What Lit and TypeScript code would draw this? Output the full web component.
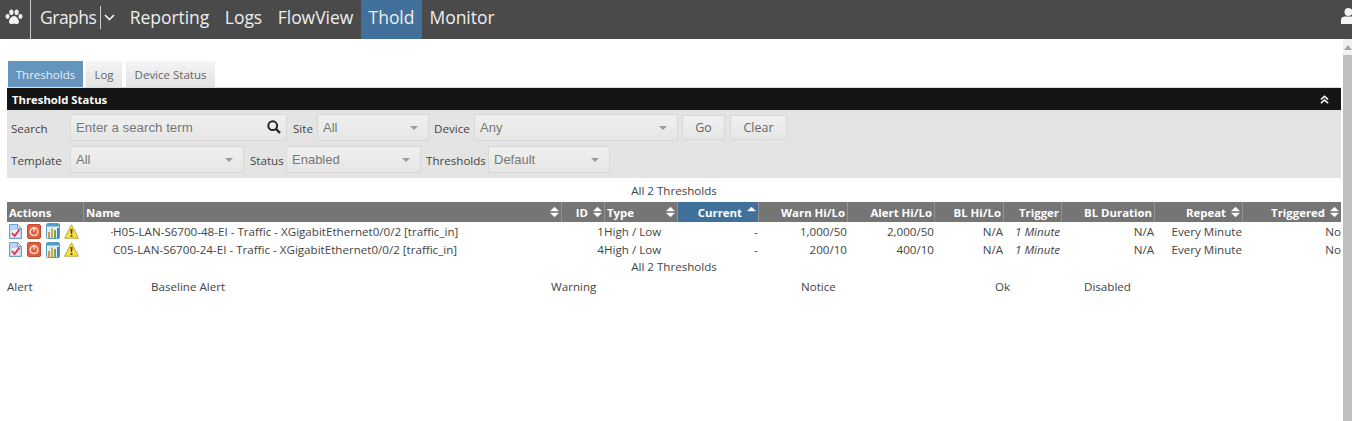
import { LitElement, html, css, svg } from "lit";
import { customElement } from "lit/decorators.js";

const sortIcon = (up = true, down = true) => svg`<svg class="sort" width="9" height="12" viewBox="0 0 9 12">
  ${up ? svg`<path d="M4.5 1 L8.5 5 H0.5 Z" fill="#fff" stroke="#fff" stroke-width=".4" stroke-linejoin="round"/>` : ""}
  ${down ? svg`<path d="M4.5 11 L8.5 7 H0.5 Z" fill="#fff" stroke="#fff" stroke-width=".4" stroke-linejoin="round"/>` : ""}
</svg>`;

const editIcon = svg`<svg class="i-edit" width="13" height="15" viewBox="0 0 13 15"><path d="M.5 .5H8.5L12.5 4.5V14.5H.5Z" fill="#bcd6f0" stroke="#6f9fd2"/><path d="M8.5 .5V4.5H12.5Z" fill="#f4f9fd" stroke="#6f9fd2"/><rect x="2.5" y="6" width="8" height="7" fill="#eef2f7"/><path d="M3 9 L5.6 12 L10.5 5.5" fill="none" stroke="#d8334f" stroke-width="1.9"/></svg>`;
const powerIcon = svg`<svg class="i-power" width="14" height="15" viewBox="0 0 14 15"><rect x=".5" y=".5" width="13" height="14" rx="1.5" fill="#dd5f3f" stroke="#c4492c"/><circle cx="7" cy="7.7" r="3.8" fill="none" stroke="#f6d9c4" stroke-width="1.6"/><path d="M7 3V7.5" stroke="#f6d9c4" stroke-width="1.6"/></svg>`;
const chartIcon = svg`<svg class="i-chart" width="14" height="16" viewBox="0 0 14 16"><rect x=".5" y=".5" width="13" height="15" rx="1" fill="#dfeef8" stroke="#5c9fc7"/><rect x="1" y="1" width="12" height="2.5" fill="#4f9cc6"/><rect x="2" y="9" width="2" height="6" fill="#e3933a"/><rect x="5" y="5.5" width="2" height="9.5" fill="#c6b240"/><rect x="8" y="7" width="2" height="8" fill="#6aa95a"/><rect x="11" y="5" width="2" height="10" fill="#3f86b8"/></svg>`;
const warnIcon = svg`<svg width="15" height="15" viewBox="0 0 15 15"><path d="M7.5 .8 L14.4 14.2 H.6 Z" fill="#f4df4c" stroke="#b9a93a" stroke-linejoin="round"/><path d="M6.4 5 H8.6 L8.1 10 H6.9 Z" fill="#5c3d16"/><rect x="6.6" y="11" width="1.8" height="1.8" fill="#5c3d16"/></svg>`;
const searchIcon = svg`<svg width="14" height="14" viewBox="0 0 14 14"><circle cx="5.7" cy="5.7" r="4.4" fill="none" stroke="#222" stroke-width="2"/><path d="M9 9 L13 13" stroke="#222" stroke-width="2.4"/></svg>`;
const pawIcon = svg`<svg width="18" height="16" viewBox="0 0 19 17" fill="#f2f2f2"><ellipse cx="2.6" cy="8" rx="2.1" ry="2.6"/><ellipse cx="6.7" cy="3.4" rx="2.2" ry="3"/><ellipse cx="12.3" cy="3.4" rx="2.2" ry="3"/><ellipse cx="16.4" cy="8" rx="2.1" ry="2.6"/><path d="M9.5 7.5C7 7.5 4.2 11 4.2 13.6C4.2 16 6.4 16.4 7.5 16C8.8 15.6 10.2 15.6 11.5 16C12.6 16.4 14.8 16 14.8 13.6C14.8 11 12 7.5 9.5 7.5Z"/></svg>`;
const userIcon = svg`<svg width="13" height="16" viewBox="0 0 13 16" fill="#f4f4f4"><circle cx="7.5" cy="4" r="4"/><path d="M0 16V11.5C0 9.5 2 8.5 4 8.5H11C12.5 8.5 13 9.5 13 11.5V16Z"/></svg>`;
const chevDown = svg`<svg width="11" height="7" viewBox="0 0 11 7"><path d="M1 1 L5.5 5.5 L10 1" fill="none" stroke="#eee" stroke-width="1.7"/></svg>`;
const chevUps = svg`<svg width="9" height="9" viewBox="0 0 10 10"><path d="M1 5 L5 1.5 L9 5 M1 9 L5 5.5 L9 9" fill="none" stroke="#fff" stroke-width="1.7"/></svg>`;

const rows = [
  { dash: true, name: "H05-LAN-S6700-48-EI - Traffic - XGigabitEthernet0/0/2 [traffic_in]", id: 1, warn: "1,000/50", alert: "2,000/50" },
  { dash: false, name: "C05-LAN-S6700-24-EI - Traffic - XGigabitEthernet0/0/2 [traffic_in]", id: 4, warn: "200/10", alert: "400/10" },
];

@customElement("app-root")
export class AppRoot extends LitElement {
  static styles = css`
    :host { display: block; width: 1352px; height: 421px; overflow: hidden; background: #fff;
      font-family: "Open Sans", "Noto Sans", sans-serif; font-size: 11.6px; color: #444; }
    * { box-sizing: border-box; }
    .nav { height: 39px; background: #4a4a4a; display: flex; align-items: stretch; color: #eee; font-size: 17.5px; }
    .logo { width: 31px; border-right: 1px solid #c8c8c8; display: flex; align-items: center; justify-content: center; padding: 0 3px 5px 0; }
    .item { padding: 0 0 5px; display: flex; align-items: center; justify-content: center; letter-spacing: -0.05px; }
    .graphs { width: 91px; padding-left: 9px; justify-content: flex-start; }
    .graphs .word { letter-spacing: -0.5px; }
    .graphs .bar { flex: none; width: 1px; height: 23px; background: #ccc; margin: 0 3px 0 4px; }
    .w-rep { width: 95px; }
    .w-logs { width: 53px; }
    .w-flow { width: 91px; }
    .w-thold { width: 61px; }
    .w-mon { width: 80px; }
    .item.on { background: #41719a; }
    .spacer { flex: 1; }
    .user { display: flex; align-items: center; padding-bottom: 7px; margin-right: -2px; }
    .below { display: flex; height: 382px; }
    .page { flex: 1; padding: 22px 2px 0 7px; min-width: 0; }
    .scroll { width: 9px; background: #f1f1f1; display: flex; flex-direction: column; align-items: center; }
    .up { height: 16px; padding-top: 6px; display: flex; justify-content: center; }
    .arrow { width: 0; height: 0; border: 4px solid transparent; border-top: 0; border-bottom: 5px solid #a3a3a3; }
    .thumb { flex: 1; width: 100%; background: #bfbfbf; }
    .tabs { display: flex; height: 27px; padding-left: 1px; border-bottom: 1px solid #ddd; }
    .tab { height: 26px; display: flex; align-items: center; justify-content: center; background: linear-gradient(#f5f5f5, #e2e2e2); color: #666; font-size: 11.5px; }
    .tab.on { background: #6595bd; color: #e8eff6; width: 75px; }
    .tab.log { width: 36px; margin-left: 3px; }
    .tab.dev { width: 89px; margin-left: 4px; }
    .title { height: 22px; background: #151515; color: #fff; font-weight: 700; font-size: 11.3px; display: flex; align-items: center; justify-content: space-between; padding: 0 12px 0 5px; }
    .filter { height: 68px; background: #e4e4e4; padding: 4px 0 0 4px; display: flex; flex-direction: column; gap: 5px; }
    .frow { display: flex; align-items: center; height: 27px; }
    .frow label { color: #444; padding-top: 2px; flex: none; }
    .l-search, .l-template { width: 59px; }
    .l-site { width: 30px; padding-left: 6px; }
    .l-device { width: 45px; padding-left: 5px; }
    .l-status { width: 42px; padding-left: 6px; }
    .l-thresholds { width: 67px; padding-left: 5px; }
    .ctl { height: 100%; flex: none; border: 1px solid #d8d8d8; background: linear-gradient(#f0f0f0, #e6e6e6); color: #777; display: flex; align-items: center; justify-content: space-between; padding: 0 5px 1px; font-size: 13px; font-family: "Liberation Sans", sans-serif; }
    .ctl .ph { font-size: 13.3px; }
    .c-search { width: 217px; }
    .c-site { width: 112px; }
    .c-device { width: 204px; }
    .c-template { width: 174px; }
    .c-status { width: 135px; }
    .c-thresholds { width: 122px; }
    .ctl .tri { width: 0; height: 0; border: 4px solid transparent; border-bottom: 0; border-top: 4px solid #999; margin-right: 5px; margin-top: 2px; }
    .btn { height: 25px; flex: none; border: 1px solid #d8d8d8; background: linear-gradient(#f0f0f0, #e6e6e6); color: #666; display: flex; align-items: center; justify-content: center; font-size: 12.5px; padding-bottom: 1px; }
    .b-go { width: 43px; margin-left: 4px; }
    .b-clear { width: 57px; margin-left: 5px; }
    .count { text-align: center; height: 24px; line-height: 25px; }
    .count.foot { height: 20px; line-height: 16px; }
    .thead, .trow { display: grid; grid-template-columns: 77px 478px 43px 73px 81px 89px 87px 69px 58px 93px 88px 99px; }
    .thead { height: 20px; background: #757575; color: #fff; font-weight: 700; }
    .th { display: flex; align-items: center; justify-content: flex-end; gap: 5px; padding: 0 2px; border-right: 1px solid #929292; white-space: nowrap; font-size: 11.4px; }
    .th:last-child { border-right: 0; padding-right: 3px; }
    .th.left { justify-content: flex-start; }
    .th.name { justify-content: space-between; padding-right: 2px; }
    .th.cur { background: #41719a; }
    .trow { height: 18.5px; align-items: center; }
    .td { text-align: right; white-space: nowrap; overflow: hidden; padding-right: 1px; }
    .td.left { text-align: left; padding: 0; }
    .td.ty { margin-left: -1px; }
    .td.nm { padding-left: 29px; }
    .td.it { font-style: italic; padding-right: 2px; }
    .dash { display: inline-block; width: 2px; height: 1px; margin-left: -2px; background: #777; vertical-align: 3px; }
    .acts { display: flex; align-items: center; padding-left: 2px; }
    .acts svg { display: block; flex: none; }
    .i-power { margin-left: 5px; }
    .i-chart { margin-left: 5px; }
    .acts svg:last-child { margin-left: 4px; }
    .legend { display: flex; height: 16px; }
    .legend span { display: block; flex: none; }
  `;

  render() {
    const heads: [string, string, unknown?][] = [
      ["Actions", "left"], ["Name", "left name", sortIcon()], ["ID", "", sortIcon()], ["Type", "left name", sortIcon()],
      ["Current", "cur", sortIcon(true, false)], ["Warn Hi/Lo", ""], ["Alert Hi/Lo", ""], ["BL Hi/Lo", ""], ["Trigger", ""],
      ["BL Duration", ""], ["Repeat", "", sortIcon()], ["Triggered", "", sortIcon()],
    ];
    const legend: [string, number][] = [["Alert", 144], ["Baseline Alert", 400], ["Warning", 250], ["Notice", 194], ["Ok", 89], ["Disabled", 100]];
    return html`
      <div class="nav">
        <div class="logo">${pawIcon}</div>
        <div class="item graphs"><span class="word">Graphs</span><span class="bar"></span>${chevDown}</div>
        <div class="item w-rep">Reporting</div>
        <div class="item w-logs">Logs</div>
        <div class="item w-flow">FlowView</div>
        <div class="item on w-thold">Thold</div>
        <div class="item w-mon">Monitor</div>
        <div class="spacer"></div>
        <div class="user">${userIcon}</div>
      </div>
      <div class="below">
        <div class="page">
          <div class="tabs">
            <div class="tab on">Thresholds</div><div class="tab log">Log</div><div class="tab dev">Device Status</div>
          </div>
          <div class="title"><span>Threshold Status</span>${chevUps}</div>
          <div class="filter">
            <div class="frow">
              <label class="l-search">Search</label>
              <div class="ctl c-search"><span class="ph">Enter a search term</span>${searchIcon}</div>
              <label class="l-site">Site</label>
              <div class="ctl c-site"><span>All</span><i class="tri"></i></div>
              <label class="l-device">Device</label>
              <div class="ctl c-device"><span>Any</span><i class="tri"></i></div>
              <div class="btn b-go">Go</div>
              <div class="btn b-clear">Clear</div>
            </div>
            <div class="frow">
              <label class="l-template">Template</label>
              <div class="ctl c-template"><span>All</span><i class="tri"></i></div>
              <label class="l-status">Status</label>
              <div class="ctl c-status"><span>Enabled</span><i class="tri"></i></div>
              <label class="l-thresholds">Thresholds</label>
              <div class="ctl c-thresholds"><span>Default</span><i class="tri"></i></div>
            </div>
          </div>
          <div class="count">All 2 Thresholds</div>
          <div class="thead">
            ${heads.map(([t, c, i]) => html`<div class="th ${c}"><span>${t}</span>${i ?? ""}</div>`)}
          </div>
          ${rows.map((r) => html`
            <div class="trow">
              <div class="acts">${editIcon}${powerIcon}${chartIcon}${warnIcon}</div>
              <div class="td left nm">${r.dash ? html`<i class="dash"></i>` : ""}${r.name}</div>
              <div class="td">${r.id}</div>
              <div class="td left ty">High / Low</div>
              <div class="td">-</div>
              <div class="td">${r.warn}</div>
              <div class="td">${r.alert}</div>
              <div class="td">N/A</div>
              <div class="td it">1 Minute</div>
              <div class="td">N/A</div>
              <div class="td">Every Minute</div>
              <div class="td">No</div>
            </div>`)}
          <div class="count foot">All 2 Thresholds</div>
          <div class="legend">
            ${legend.map(([t, w]) => html`<span style="width:${w}px">${t}</span>`)}
          </div>
        </div>
        <div class="scroll">
          <div class="up"><i class="arrow"></i></div>
          <div class="thumb"></div>
        </div>
      </div>
    `;
  }
}
